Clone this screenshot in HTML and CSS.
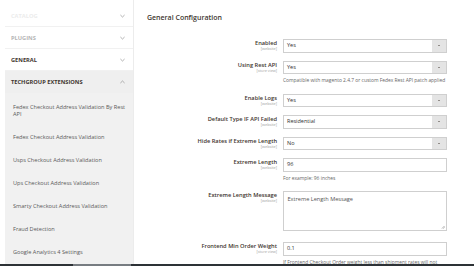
FILE: index.html
```html
<!DOCTYPE html>
<html lang="en">

<head>
    <meta charset="UTF-8">
    <meta name="viewport" content="width=device-width, initial-scale=1.0">
    <title>General Configuration</title>
    <link rel="stylesheet" href="styles.css">
</head>

<body>
    <div class="page">
        <!-- Config tabs -->
        <div class="sidebar">
            <div class="tab tab-faint">
                <span>CATALOG</span>
                <svg class="chevron" viewBox="0 0 6 4"><path d="M0.5 0.8 L3 3.2 L5.5 0.8" /></svg>
            </div>
            <div class="tab tab-dim">
                <span>PLUGINS</span>
                <svg class="chevron" viewBox="0 0 6 4"><path d="M0.5 0.8 L3 3.2 L5.5 0.8" /></svg>
            </div>
            <div class="tab">
                <span>GENERAL</span>
                <svg class="chevron" viewBox="0 0 6 4"><path d="M0.5 0.8 L3 3.2 L5.5 0.8" /></svg>
            </div>
            <div class="tab tab-open">
                <span>TECHGROUP EXTENSIONS</span>
                <svg class="chevron" viewBox="0 0 6 4"><path d="M0.5 3.2 L3 0.8 L5.5 3.2" /></svg>
            </div>
            <ul class="submenu">
                <li>Fedex Checkout Address Validation By Rest API</li>
                <li>Fedex Checkout Address Validation</li>
                <li>Usps Checkout Address Validation</li>
                <li>Ups Checkout Address Validation</li>
                <li>Smarty Checkout Address Validation</li>
                <li>Fraud Detection</li>
                <li>Google Analytics 4 Settings</li>
            </ul>
        </div>

        <!-- Section content -->
        <div class="content">
            <h2>General Configuration</h2>
            <div class="form">
                <div class="row">
                    <div class="label">Enabled<span class="scope">[website]</span></div>
                    <div class="field">
                        <div class="select"><span>Yes</span></div>
                    </div>
                </div>
                <div class="row">
                    <div class="label">Using Rest API<span class="scope">[store view]</span></div>
                    <div class="field">
                        <div class="select"><span>Yes</span></div>
                        <div class="note">Compatible with magento 2.4.7 or custom Fedex Rest API patch applied</div>
                    </div>
                </div>
                <div class="row">
                    <div class="label">Enable Logs<span class="scope">[website]</span></div>
                    <div class="field">
                        <div class="select"><span>Yes</span></div>
                    </div>
                </div>
                <div class="row">
                    <div class="label">Default Type IF API Failed<span class="scope">[website]</span></div>
                    <div class="field">
                        <div class="select"><span>Residential</span></div>
                    </div>
                </div>
                <div class="row">
                    <div class="label">Hide Rates if Extreme Length<span class="scope">[website]</span></div>
                    <div class="field">
                        <div class="select"><span>No</span></div>
                    </div>
                </div>
                <div class="row">
                    <div class="label">Extreme Length<span class="scope">[website]</span></div>
                    <div class="field">
                        <div class="input">96</div>
                        <div class="note">For example: 96 inches</div>
                    </div>
                </div>
                <div class="row row-tall">
                    <div class="label">Extreme Length Message<span class="scope">[website]</span></div>
                    <div class="field">
                        <div class="textarea">Extreme Length Message
                            <svg class="grip" viewBox="0 0 4 4"><path d="M3.5 1 L1 3.5 M3.5 2.5 L2.5 3.5" /></svg>
                        </div>
                    </div>
                </div>
                <div class="row">
                    <div class="label">Frontend Min Order Weight<span class="scope">[store view]</span></div>
                    <div class="field">
                        <div class="input">0.1</div>
                        <div class="note">If Frontend Checkout Order weight less than shipment rates will not</div>
                    </div>
                </div>
            </div>
        </div>
    </div>

    <!-- video player strip over the bottom -->
    <div class="player">
        <div class="progress"></div>
    </div>
</body>

</html>
```

FILE: styles.css
```css
body {
    margin: 0;
    height: 278px;
    overflow: hidden;
    position: relative;
    background: #fff;
    font-family: 'Open Sans', 'Noto Sans', sans-serif;
    color: #303030;
}

.page {
    display: flex;
}

.sidebar {
    width: 128px;
    margin-left: 5px;
    padding-top: 5px;
    border-right: 1px solid #ececec;
    flex-shrink: 0;
}

.tab {
    display: flex;
    align-items: center;
    justify-content: space-between;
    height: 22px;
    box-sizing: border-box;
    padding: 0 8px 0 6px;
    border-bottom: 1px solid #f1f1f1;
    font-size: 5.7px;
    font-weight: 700;
    color: #41362f;
}

.tab-faint span {
    color: #ececec;
}

.tab-dim span {
    color: #b5b5b5;
}

.tab-open {
    background: #efefef;
    border-bottom: none;
}

.chevron {
    width: 5px;
    height: 4px;
    fill: none;
    stroke: #8a8a8a;
    stroke-width: 0.8;
}

.submenu {
    list-style: none;
    margin: 0;
    padding: 3px 0 0;
    background: #f1f1f1;
}

.submenu li {
    padding: 8px 6px 8px 8px;
    font-size: 5.6px;
    line-height: 7px;
    color: #5a5a5a;
}

.content {
    flex: 1;
    padding: 13px 28px 0 13px;
}

h2 {
    margin: 0 0 16px;
    font-size: 7px;
    line-height: 10px;
    font-weight: 600;
    color: #41362f;
}

.form {
    display: flex;
    flex-direction: column;
    gap: 8px;
}

.row {
    display: grid;
    grid-template-columns: 130px 164px;
    column-gap: 6px;
}

.row-tall {
    margin-bottom: 3px;
}

.label {
    display: flex;
    flex-direction: column;
    align-items: flex-end;
    padding-top: 1px;
    font-size: 5.7px;
    line-height: 6px;
    font-weight: 600;
    color: #41362f;
}

.scope {
    font-size: 3.8px;
    line-height: 5px;
    font-weight: 400;
    color: #a0a0a0;
}

.select,
.input,
.textarea {
    position: relative;
    box-sizing: border-box;
    border: 1px solid #cfcfcf;
    background: #fff;
    font-size: 5.5px;
    color: #303030;
}

.select,
.input {
    height: 13.5px;
    line-height: 11.5px;
    padding-left: 3px;
}

.select::after {
    content: "";
    position: absolute;
    top: 0;
    right: 0;
    width: 14px;
    height: 100%;
    background: #e4e4e4;
}

.select::before {
    content: "";
    position: absolute;
    z-index: 1;
    top: 5px;
    right: 6px;
    border-left: 1.3px solid transparent;
    border-right: 1.3px solid transparent;
    border-top: 1.6px solid #41362f;
}

.textarea {
    height: 40px;
    padding: 2.5px 3.5px;
    font-size: 5.6px;
    line-height: 8px;
    color: #555;
}

.grip {
    position: absolute;
    right: 1px;
    bottom: 1px;
    width: 4px;
    height: 4px;
    stroke: #777;
    stroke-width: 0.6;
}

.note {
    margin: 2px 0 1.5px;
    font-size: 4.9px;
    line-height: 8px;
    color: #666;
    white-space: nowrap;
}

.player {
    position: absolute;
    left: 0;
    right: 0;
    top: 264px;
    bottom: 0;
    background: #fff;
    border-top: 2px solid #2d3236;
}

.progress {
    position: absolute;
    top: -2px;
    left: 73px;
    width: 58px;
    height: 2px;
    background: #777c81;
}
```
